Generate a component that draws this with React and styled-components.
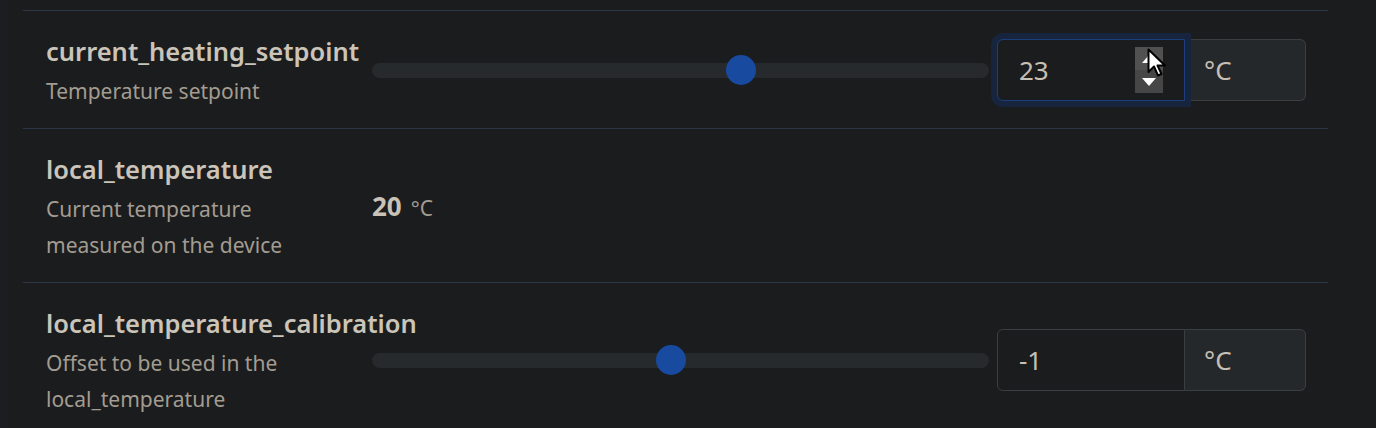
import React from 'react';
import styled, { createGlobalStyle } from 'styled-components';

const GlobalStyle = createGlobalStyle`
  html, body {
    margin: 0;
    padding: 0;
    background: #1b1c1e;
  }
  body {
    font-family: 'Noto Sans', 'Open Sans', sans-serif;
    color: #c6bfb4;
  }
`;

const Page = styled.div`
  display: flex;
  height: 428px;
  overflow: hidden;
  padding-top: 10px;
  box-sizing: border-box;
  border-left: 7px solid #1c1d20;
`;

const Panel = styled.div`
  width: 1305px;
  margin-left: 16px;
  display: flex;
  flex-direction: column;
`;

const Row = styled.div`
  display: grid;
  grid-template-columns: 326px 1fr;
  align-items: center;
  padding: 20px 22px 19px 23px;
  border-top: 1px solid #2a3546;
`;

const Label = styled.div`
  display: flex;
  flex-direction: column;
`;

const Title = styled.div`
  font-size: 25.5px;
  font-weight: 600;
  line-height: 41px;
  color: #cbc4b9;
  white-space: nowrap;
`;

const Desc = styled.div`
  font-size: 21px;
  line-height: 36px;
  padding-top: 1px;
  color: #a39c91;
  max-width: 270px;
`;

const Controls = styled.div`
  display: flex;
  align-items: center;
  gap: 8px;
`;

const Track = styled.div`
  position: relative;
  flex: 1;
  height: 15px;
  border-radius: 8px;
  background: #272a2c;
`;

const Thumb = styled.div`
  position: absolute;
  top: 50%;
  width: 30px;
  height: 30px;
  margin: -15px 0 0 -15px;
  border-radius: 50%;
  background: #184aa0;
`;

const InputGroup = styled.div`
  display: flex;
  width: 309px;
  height: 62px;
  flex-shrink: 0;
`;

const InputBox = styled.div`
  position: relative;
  box-sizing: border-box;
  width: 188px;
  display: flex;
  align-items: center;
  padding-left: 21px;
  font-size: 26px;
  color: #c6bfb4;
  background: #1b1c1e;
  border: 1px solid ${p => (p.$focus ? '#1b3f7c' : '#3b3e41')};
  border-radius: 6px 0 0 6px;
  box-shadow: ${p => (p.$focus ? '0 0 0 6px #16253d' : 'none')};
  z-index: 1;
`;

const Unit = styled.div`
  flex: 1;
  box-sizing: border-box;
  display: flex;
  align-items: center;
  padding-left: 19px;
  font-size: 26px;
  color: #c6bfb4;
  background: #25282a;
  border: 1px solid #3b3e41;
  border-left: none;
  border-radius: 0 6px 6px 0;
`;

const Spinner = styled.div`
  position: absolute;
  left: 137px;
  top: 7px;
  width: 28px;
  height: 46px;
  display: flex;
  flex-direction: column;
`;

const SpinHalf = styled.div`
  flex: 1;
  display: flex;
  align-items: center;
  justify-content: center;
  background: ${p => (p.$up ? '#515151' : '#464646')};
`;

const Cursor = styled.svg`
  position: absolute;
  left: 149px;
  top: 8px;
`;

const Value = styled.div`
  display: flex;
  align-items: baseline;
  gap: 9px;
`;

const Number = styled.span`
  font-size: 26px;
  font-weight: 700;
  color: #c9c2b7;
`;

const SmallUnit = styled.span`
  font-size: 21px;
  color: #a39c91;
`;

const Tri = ({ up }) => (
  <svg width="16" height="10" viewBox="0 0 16 10">
    <path d={up ? 'M8 1 L15 9 L1 9 Z' : 'M1 1 L15 1 L8 9 Z'} fill="#ffffff" />
  </svg>
);

const SliderControl = ({ pct, value, focus }) => (
  <Controls>
    <Track>
      <Thumb style={{ left: `${pct}%` }} />
    </Track>
    <InputGroup>
      <InputBox $focus={focus}>
        {value}
        {focus && (
          <>
            <Spinner>
              <SpinHalf $up>
                <Tri up />
              </SpinHalf>
              <SpinHalf>
                <Tri />
              </SpinHalf>
            </Spinner>
            <Cursor width="20" height="30" viewBox="0 0 20 30">
              <path
                d="M1.5 1.5 L1.5 24 L7 18.5 L11 27.5 L14.5 26 L10.5 17.5 L18 17.5 Z"
                fill="#ffffff"
                stroke="#000000"
                strokeWidth="2"
                strokeLinejoin="round"
              />
            </Cursor>
          </>
        )}
      </InputBox>
      <Unit>°C</Unit>
    </InputGroup>
  </Controls>
);

const App = () => (
  <>
    <GlobalStyle />
    <Page>
      <Panel>
        <Row>
          <Label>
            <Title>current_heating_setpoint</Title>
            <Desc>Temperature setpoint</Desc>
          </Label>
          <SliderControl pct={59.8} value="23" focus />
        </Row>
        <Row>
          <Label>
            <Title>local_temperature</Title>
            <Desc>Current temperature measured on the device</Desc>
          </Label>
          <Value>
            <Number>20</Number>
            <SmallUnit>°C</SmallUnit>
          </Value>
        </Row>
        <Row>
          <Label>
            <Title>local_temperature_calibration</Title>
            <Desc>Offset to be used in the local_temperature</Desc>
          </Label>
          <SliderControl pct={48.4} value="-1" />
        </Row>
      </Panel>
    </Page>
  </>
);

export default App;
